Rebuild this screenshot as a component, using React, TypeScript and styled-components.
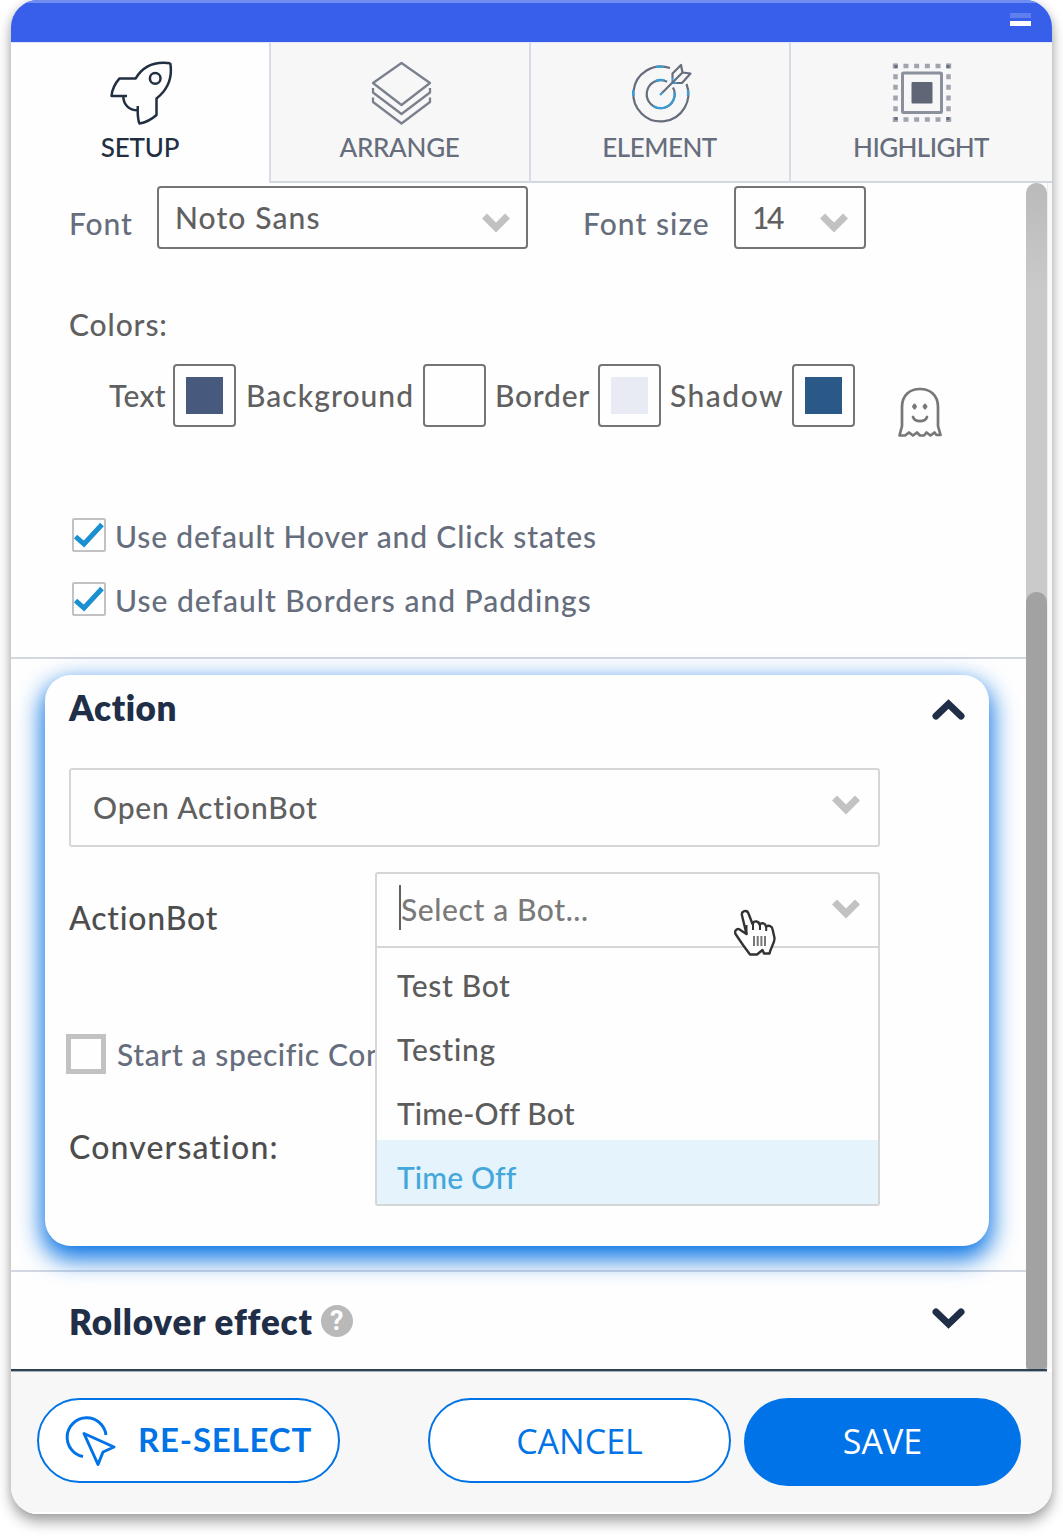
import React from "react";
import styled, { createGlobalStyle } from "styled-components";

const GlobalStyle = createGlobalStyle`
  *, *::before, *::after { box-sizing: border-box; }
  body { margin: 0; background: #fff; font-family: Lato, "Open Sans", sans-serif; }
  svg { display: block; flex: none; }
`;

const Page = styled.div`
  height: 1536px;
  padding: 0 11px;
  overflow: hidden;
`;

const Panel = styled.div`
  display: flex;
  flex-direction: column;
  width: 1041px;
  height: 1514px;
  border-radius: 27px;
  overflow: hidden;
  background: #fefefe;
  box-shadow: 0 8px 14px rgba(0, 0, 0, 0.34), 0 0 8px rgba(0, 0, 0, 0.1);
  > * { flex-shrink: 0; }
`;

const TitleBar = styled.header`
  display: flex;
  flex-direction: column;
  align-items: flex-end;
  gap: 3px;
  height: 42px;
  padding: 10px 21px 0 0;
  background: #375fea;
  border-top: 3px solid #6f8ef1;
`;

const Bar = styled.span<{ $faint?: boolean }>`
  width: 21px;
  height: 5px;
  background: ${(p) => (p.$faint ? "#5f7fee" : "#fff")};
`;

const Tabs = styled.nav`
  display: grid;
  grid-template-columns: 258px 260px 260px 263px;
  height: 141px;
  border-top: 1px solid #dfe5fb;
`;

const Tab = styled.div<{ $active?: boolean }>`
  display: flex;
  flex-direction: column;
  align-items: center;
  padding-top: 17px;
  padding-right: ${(p) => (p.$active ? 0 : 1)}px;
  color: ${(p) => (p.$active ? "#222e42" : "#666d7c")};
  background: ${(p) => (p.$active ? "#fefefe" : "#f7f7f7")};
  border-left: ${(p) => (p.$active ? "none" : "2px solid #d8dce6")};
  border-bottom: ${(p) => (p.$active ? "none" : "2px solid #d3d7e2")};
  svg { margin-left: 2px; }
`;

const TabLabel = styled.span<{ $track: number }>`
  margin-top: 5px;
  font-size: 26px;
  line-height: 32px;
  font-weight: 500;
  letter-spacing: ${(p) => p.$track}px;
`;

const Viewport = styled.div`
  display: grid;
  grid-template-columns: 1015px 21px 5px;
  height: 1186px;
`;

const Content = styled.main`
  display: flex;
  flex-direction: column;
  > * { flex-shrink: 0; }
`;

const Track = styled.div`
  display: flex;
  align-items: flex-end;
  border-radius: 10px 10px 0 0;
  background: linear-gradient(#bababa, #cacaca 110px);
`;

const Thumb = styled.div`
  width: 21px;
  height: 777px;
  border-radius: 10px 10px 4px 4px;
  background: #a2a2a2;
`;

const Gutter = styled.div`
  background: #f9f9f9;
  border-left: 1px solid #ececec;
`;

const Txt = styled.span<{ $w?: number; $track?: number; $size?: number; $color?: string; $ml?: number }>`
  flex: none;
  white-space: nowrap;
  width: ${(p) => (p.$w ? `${p.$w}px` : "auto")};
  margin-left: ${(p) => p.$ml ?? 0}px;
  font-size: ${(p) => p.$size ?? 30}px;
  font-weight: 500;
  line-height: 40px;
  letter-spacing: ${(p) => p.$track ?? 0.9}px;
  color: ${(p) => p.$color ?? "#606060"};
`;

const FontRow = styled.div`
  display: flex;
  align-items: center;
  height: 63px;
  margin-top: 3px;
  padding-left: 58px;
`;

const FieldLabel = styled(Txt)`
  padding-top: 10px;
`;

const FontSelect = styled.div<{ $w: number }>`
  display: flex;
  align-items: center;
  justify-content: space-between;
  width: ${(p) => p.$w}px;
  height: 63px;
  padding: 0 16px 1px;
  border: 2px solid #757575;
  border-radius: 4px;
  background: #fefefe;
  svg { margin-top: 12px; }
`;

const ColorsHeading = styled.div`
  margin-top: 55px;
  padding-left: 58px;
  height: 40px;
`;

const SwatchRow = styled.div`
  display: flex;
  align-items: center;
  height: 64px;
  margin-top: 19px;
  padding-left: 98px;
`;

const Swatch = styled.div`
  display: grid;
  place-items: center;
  width: 63px;
  height: 63px;
  border: 2px solid #757575;
  border-radius: 4px;
`;

const Chip = styled.span<{ $fill: string }>`
  width: 37px;
  height: 37px;
  background: ${(p) => p.$fill};
`;

const GhostSlot = styled.div`
  margin: 33px 0 0 43px;
`;

const Checks = styled.div`
  display: flex;
  flex-direction: column;
  gap: 30px;
  height: 230px;
  padding: 91px 0 0 61px;
`;

const CheckRow = styled.label`
  display: flex;
  align-items: center;
  height: 34px;
`;

const Checkbox = styled.span`
  width: 34px;
  height: 34px;
  border: 2px solid #c2c2c2;
  border-radius: 2px;
`;

const CheckText = styled(Txt)`
  padding-top: 2px;
`;

const Divider = styled.hr`
  width: 100%;
  height: 2px;
  margin: 0;
  border: 0;
  background: #d3d7e2;
`;

const ActionCard = styled.section`
  position: relative;
  width: 944px;
  height: 571px;
  margin: 16px 0 24px 34px;
  padding: 0 23px 0 24px;
  border-radius: 26px;
  background: #fefefe;
  box-shadow: 0 10px 24px 3px #0a74e4;
`;

const CardHeader = styled.div`
  display: flex;
  justify-content: space-between;
  align-items: center;
  height: 67px;
  padding-bottom: 3px;
  svg { margin: 4px 1px 0 0; }
`;

const Heading = styled.h2<{ $track: number }>`
  margin: 0;
  font-size: 35px;
  line-height: 44px;
  font-weight: 800;
  letter-spacing: ${(p) => p.$track}px;
  color: #212e47;
`;

const ActionSelect = styled.div`
  display: flex;
  align-items: center;
  justify-content: space-between;
  width: 811px;
  height: 79px;
  margin-top: 26px;
  padding: 0 18px 2px 22px;
  border: 2px solid #d6d6d6;
  border-radius: 3px;
  svg { margin-top: -3px; }
`;

const BotRow = styled.div`
  display: flex;
  height: 76px;
  margin-top: 25px;
`;

const BotLabel = styled(Txt)`
  padding-top: 26px;
`;

const Combo = styled.div`
  position: relative;
  width: 505px;
  height: 76px;
`;

const ComboInput = styled.div`
  display: flex;
  align-items: center;
  height: 76px;
  padding: 0 18px 3px 22px;
  border: 2px solid #d6d6d6;
  border-radius: 3px 3px 0 0;
  svg { margin: 0 0 0 auto; }
`;

const Caret = styled.span`
  width: 2px;
  height: 45px;
  margin-top: -2px;
  background: #606060;
`;

const Menu = styled.ul`
  position: absolute;
  z-index: 1;
  top: 76px;
  left: 0;
  width: 505px;
  margin: 0;
  padding: 0;
  list-style: none;
  background: #fefefe;
  border: 2px solid #d6d6d6;
  border-top: 0;
  border-radius: 0 0 3px 3px;
`;

const Option = styled.li<{ $on?: boolean }>`
  display: flex;
  align-items: center;
  height: 64px;
  padding: 10px 0 0 20px;
  line-height: 40px;
  background: ${(p) => (p.$on ? "#e5f3fc" : "transparent")};
`;

const Pointer = styled.div`
  position: absolute;
  z-index: 2;
  left: 358px;
  top: 37px;
`;

const StartRow = styled.label`
  display: flex;
  align-items: center;
  width: 311px;
  height: 41px;
  margin: 85px 0 0 -3px;
  overflow: hidden;
`;

const EmptyBox = styled.span`
  flex: none;
  width: 40px;
  height: 40px;
  border: 5px solid #c2c2c2;
`;

const Conversation = styled.div`
  margin-top: 53px;
`;

const RolloverRow = styled.div`
  display: flex;
  align-items: center;
  height: 97px;
  padding: 1px 61px 0 58px;
  > svg:last-child { margin: -5px 0 0 auto; }
`;

const HelpBadge = styled.span`
  display: grid;
  place-items: center;
  width: 32px;
  height: 32px;
  margin: 0 0 0 8px;
  border-radius: 50%;
  background: #b9b9b9;
  color: #fff;
  font: 700 27px/32px Roboto, sans-serif;
`;

const Footer = styled.footer`
  display: flex;
  align-items: flex-start;
  height: 142px;
  padding: 26px 0 0 26px;
  background: #f7f7f7;
  border-bottom: 2px solid #fff;
`;

const DarkRule = styled.div`
  width: 1036px;
  height: 3px;
  background: #2c4356;
  border-bottom: 1px solid #a9b1b8;
`;

const Button = styled.button<{ $w: number; $ml?: number; $primary?: boolean; $lato?: boolean; $track?: number }>`
  display: flex;
  align-items: center;
  justify-content: center;
  width: ${(p) => p.$w}px;
  height: ${(p) => (p.$primary ? 88 : 85)}px;
  margin: 0 0 0 ${(p) => p.$ml ?? 0}px;
  padding: ${(p) => (p.$lato ? "0 0 4px" : p.$primary ? "0 0 3px" : "0")};
  border: ${(p) => (p.$primary ? "0" : "2px solid #0073e6")};
  border-radius: 44px;
  background: ${(p) => (p.$primary ? "#0073e8" : "#fff")};
  color: ${(p) => (p.$primary ? "#fff" : "#0073e6")};
  font-family: ${(p) => (p.$lato ? "Lato" : '"Open Sans"')}, sans-serif;
  font-weight: ${(p) => (p.$lato ? 700 : 500)};
  font-size: ${(p) => (p.$lato ? 33 : 34)}px;
  line-height: 44px;
  letter-spacing: ${(p) => p.$track ?? 0}px;
  svg { margin: 5px 22px 0 0; }
`;

const SLATE = "#666d7c";

const Chevron = ({ color = "#c2c2c2" }: { color?: string }) => (
  <svg width="28" height="20" viewBox="0 0 28 20" fill="none" stroke={color} strokeWidth="7">
    <path d="M2.500 3l11.500 11.500L25.500 3" strokeLinejoin="miter" />
  </svg>
);

const BigChevron = ({ up }: { up?: boolean }) => (
  <svg width="33" height="22" viewBox="0 0 33 22" fill="none" stroke="#212e47" strokeWidth="7" strokeLinecap="round">
    <path d={up ? "M4 18L16.500 6 29 18" : "M4 4l12.500 12L29 4"} />
  </svg>
);

const Rocket = () => (
  <svg width="64" height="66" viewBox="109 60 64 66" fill="none" stroke="#222e42" strokeWidth="2.500" strokeLinejoin="round">
    <path d="M170.300 63.300C157 61.500 144 64.500 135.700 78.400H119.500C115.500 83 112 90 111.500 96H127M170.300 63.300C172.500 77 168.500 89 156.500 98.500V115C152 119 146 122.500 139.500 123.500C137.500 119 137.500 113 137.800 106M123.300 96.500C123.500 105 129.500 110.300 137.500 110.300" />
    <circle cx="155.200" cy="78.400" r="5.300" />
  </svg>
);

const Layers = () => (
  <svg width="64" height="66" viewBox="369 60 64 66" fill="none" stroke="#7a808d" strokeWidth="2.300" strokeLinejoin="round">
    <path d="M401.500 63L430 83 401.500 105 373 83z" />
    <path d="M373 88v4.500L401.500 114 430 92.500V88M373 97.500v4.500L401.500 123.500 430 102v-4.500" />
  </svg>
);

const Target = () => (
  <svg width="64" height="66" viewBox="629 60 64 66" fill="none" stroke="#666d7c" strokeWidth="2.200">
    <path d="M670 68A27.500 27.500 0 1 0 686.500 84" />
    <path d="M667 81.700A14 14 0 1 0 673 87.500" />
    <g stroke="#3a9bd5">
      <path d="M656 67a27.500 27.500 0 0 1 8 0M633.300 90a27.500 27.500 0 0 0 0 6M687.900 90a27.500 27.500 0 0 1 0 6" />
      <path d="M655.500 81a14 14 0 0 1 9 -0.500M653 105.800a14 14 0 0 0 21.500 -9.500v-4M660 95l2.600-2.600M672.500 78v5h5" />
    </g>
    <path d="M662.500 92.500L682 73M672.500 78V73.500L681 65l1.500 7.500 8 1-8.500 9.500h-5" strokeLinejoin="round" />
  </svg>
);

const Highlight = () => (
  <svg width="64" height="66" viewBox="890.500 60 64 66" fill="none">
    <path d="M893.300 66h58.400M893.300 119.500h58.400" stroke="#a0a4af" strokeWidth="4.500" strokeDasharray="5 5.680" />
    <path d="M896 63.500v58.500M949 63.500v58.500" stroke="#a0a4af" strokeWidth="4.500" strokeDasharray="5 5.680" />
    <g fill="#666d7c">
      <rect x="895" y="65" width="3" height="3" />
      <rect x="947" y="65" width="3" height="3" />
      <rect x="895" y="117" width="3" height="3" />
      <rect x="947" y="117" width="3" height="3" />
    </g>
    <rect x="903" y="73" width="39" height="39.500" rx="1" stroke="#8b909d" strokeWidth="3" />
    <rect x="912" y="82" width="21" height="21.500" rx="1" fill="#5f6676" />
  </svg>
);

const Ghost = () => (
  <svg width="44" height="50" viewBox="0 0 44 50" fill="none" stroke="#777" strokeWidth="2.700" strokeLinecap="round" strokeLinejoin="round">
    <path d="M4 39V20C4 8 12 2 22 2s18 6 18 18v19l2.500 9h-4l-2-2.500-4 3-4-3-2.500 3h-4l-3-3-4 3-4-3-4 3H1.500z" />
    <path d="M16.500 18v3M15.500 19.500h2M27 18v3M26 19.500h2" strokeWidth="3" />
    <path d="M15 30c2 5.500 12 5.500 14 0" />
  </svg>
);

const Tick = () => (
  <svg width="30" height="30" viewBox="0 0 30 30" fill="none" stroke="#1b90d0" strokeWidth="5">
    <path d="M1.500 16.500l8.500 7.500L28 4.500" />
  </svg>
);

const Hand = () => (
  <svg width="44" height="48" viewBox="0 0 44 48" fill="#fff" stroke="#333" strokeWidth="2.400" strokeLinejoin="round">
    <path d="M13.500 25L9 6.500C8 2 14 0 15.500 4.500L19.500 15C21 11 26 12 26.500 15.500C29 13 32.500 14.500 33 17.500C36 16 39 17 39.500 20L41.500 29C42 33 38 38 36.500 44.500H31L29.500 41L24 45.500H17L10 36L2.500 25C1 20.500 5 18.500 8 21.500z" />
    <path d="M13.500 25.500V16M20 15v6M27 15.500V21M33.200 17.500V22" strokeWidth="2" />
    <path d="M21 27v10M24.700 27v10M28.400 27v10M32 27v10" stroke="#777" strokeWidth="2" />
  </svg>
);

const Reselect = () => (
  <svg width="51" height="52" viewBox="0 0 51 52" fill="none" stroke="#0073e6" strokeWidth="3" strokeLinejoin="round">
    <path d="M18 41.500A19.500 19.500 0 1 1 41 20" />
    <path d="M19 18.500L49 32L38 37L33 49.500z" />
  </svg>
);

const OPTIONS = [
  { text: "Test Bot", track: 0.65 },
  { text: "Testing", track: 0.75 },
  { text: "Time-Off Bot", track: 0.15 },
  { text: "Time Off", track: 0.15, on: true },
];

export default function App() {
  return (
    <Page>
      <GlobalStyle />
      <Panel>
        <TitleBar>
          <Bar $faint />
          <Bar />
        </TitleBar>
        <Tabs>
          <Tab $active><Rocket /><TabLabel $track={-0.2}>SETUP</TabLabel></Tab>
          <Tab><Layers /><TabLabel $track={-0.3}>ARRANGE</TabLabel></Tab>
          <Tab><Target /><TabLabel $track={-0.5}>ELEMENT</TabLabel></Tab>
          <Tab><Highlight /><TabLabel $track={-0.6}>HIGHLIGHT</TabLabel></Tab>
        </Tabs>
        <Viewport>
          <Content>
            <FontRow>
              <FieldLabel $w={88} $color={SLATE}>Font</FieldLabel>
              <FontSelect $w={371}><Txt $track={1.1}>Noto Sans</Txt><Chevron /></FontSelect>
              <FieldLabel $w={151} $ml={55} $color={SLATE} $track={1.05}>Font size</FieldLabel>
              <FontSelect $w={132}><Txt $track={-2.500}>14</Txt><Chevron /></FontSelect>
            </FontRow>
            <ColorsHeading><Txt>Colors:</Txt></ColorsHeading>
            <SwatchRow>
              <Txt $w={64} $track={0.3}>Text</Txt>
              <Swatch><Chip $fill="#475a7e" /></Swatch>
              <Txt $w={177} $ml={10} $track={1.05}>Background</Txt>
              <Swatch><Chip $fill="#fefefe" /></Swatch>
              <Txt $w={103} $ml={9} $track={0.75}>Border</Txt>
              <Swatch><Chip $fill="#e8ebf4" /></Swatch>
              <Txt $w={122} $ml={9} $track={1.5}>Shadow</Txt>
              <Swatch><Chip $fill="#2b5987" /></Swatch>
              <GhostSlot><Ghost /></GhostSlot>
            </SwatchRow>
            <Checks>
              <CheckRow><Checkbox><Tick /></Checkbox><CheckText $ml={9} $track={0.85} $color={SLATE}>Use default Hover and Click states</CheckText></CheckRow>
              <CheckRow><Checkbox><Tick /></Checkbox><CheckText $ml={9} $track={1} $color={SLATE}>Use default Borders and Paddings</CheckText></CheckRow>
            </Checks>
            <Divider />
            <ActionCard>
              <CardHeader><Heading $track={0.6}>Action</Heading><BigChevron up /></CardHeader>
              <ActionSelect><Txt $track={0.85}>Open ActionBot</Txt><Chevron /></ActionSelect>
              <BotRow>
                <BotLabel $w={306} $size={32} $track={0.8} $color="#4d4d4d">ActionBot</BotLabel>
                <Combo>
                  <ComboInput><Caret /><Txt $track={0.6} $color="#7a7a7a">Select a Bot...</Txt><Chevron /></ComboInput>
                  <Menu>
                    {OPTIONS.map((o) => (
                      <Option key={o.text} $on={o.on}>
                        <Txt $track={o.track} $color={o.on ? "#44a7da" : "#5c5c5c"}>{o.text}</Txt>
                      </Option>
                    ))}
                  </Menu>
                  <Pointer><Hand /></Pointer>
                </Combo>
              </BotRow>
              <StartRow><EmptyBox /><Txt $ml={11} $track={0.6} $color={SLATE}>Start a specific Con</Txt></StartRow>
              <Conversation><Txt $size={32} $track={1.15} $color="#4d4d4d">Conversation:</Txt></Conversation>
            </ActionCard>
            <Divider />
            <RolloverRow>
              <Heading $track={0.85}>Rollover effect</Heading>
              <HelpBadge>?</HelpBadge>
              <BigChevron />
            </RolloverRow>
          </Content>
          <Track><Thumb /></Track>
          <Gutter />
        </Viewport>
        <DarkRule />
        <Footer>
          <Button $w={303} $lato $track={0.8}><Reselect />RE-SELECT</Button>
          <Button $w={303} $ml={88}>CANCEL</Button>
          <Button $w={277} $ml={13} $primary>SAVE</Button>
        </Footer>
      </Panel>
    </Page>
  );
}
